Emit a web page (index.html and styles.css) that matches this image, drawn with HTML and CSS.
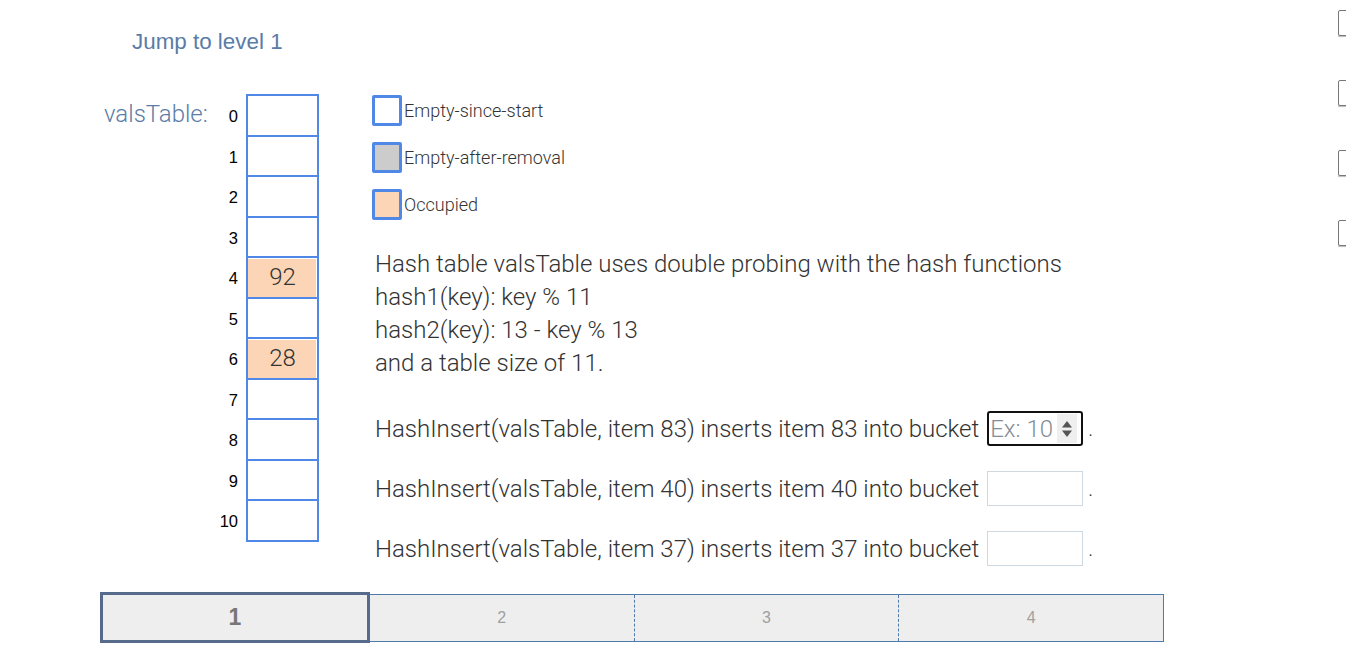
FILE: index.html
```html
<!DOCTYPE html>
<html>
<head>
<meta charset="utf-8">
<link rel="stylesheet" href="styles.css">
</head>
<body>
<div class="page">
  <div class="content">
    <div class="jump">Jump to level 1</div>
    <div class="main">
      <div class="left">
        <div class="tname">valsTable:</div>
        <div class="table">
          <div class="idx">0</div><div class="cell"></div>
          <div class="idx">1</div><div class="cell"></div>
          <div class="idx">2</div><div class="cell"></div>
          <div class="idx">3</div><div class="cell"></div>
          <div class="idx">4</div><div class="cell occ">92</div>
          <div class="idx">5</div><div class="cell"></div>
          <div class="idx">6</div><div class="cell occ">28</div>
          <div class="idx">7</div><div class="cell"></div>
          <div class="idx">8</div><div class="cell"></div>
          <div class="idx">9</div><div class="cell"></div>
          <div class="idx">10</div><div class="cell"></div>
        </div>
      </div>
      <div class="right">
        <div class="legend">
          <div class="lg-row"><span class="lg-box"></span><span>Empty-since-start</span></div>
          <div class="lg-row"><span class="lg-box removed"></span><span>Empty-after-removal</span></div>
          <div class="lg-row"><span class="lg-box occupied"></span><span>Occupied</span></div>
        </div>
        <div class="desc">
          <div>Hash table valsTable uses double probing with the hash functions</div>
          <div>hash1(key): key % 11</div>
          <div>hash2(key): 13 - key % 13</div>
          <div>and a table size of 11.</div>
        </div>
        <div class="questions">
          <div class="q"><span>HashInsert(valsTable, item 83) inserts item 83 into bucket</span><span class="inp focus"><span class="ph">Ex: 10</span><span class="spin"><svg width="12" height="22" viewBox="0 0 12 22"><path d="M6 3 L11 9.5 H1 Z" fill="#555"/><path d="M6 19 L11 12.5 H1 Z" fill="#555"/></svg></span></span><span class="dot">.</span></div>
          <div class="q"><span>HashInsert(valsTable, item 40) inserts item 40 into bucket</span><span class="inp"></span><span class="dot">.</span></div>
          <div class="q"><span>HashInsert(valsTable, item 37) inserts item 37 into bucket</span><span class="inp"></span><span class="dot">.</span></div>
        </div>
      </div>
    </div>
    <div class="levels">
      <div class="lvl current">1</div>
      <div class="lvl">2</div>
      <div class="lvl">3</div>
      <div class="lvl">4</div>
    </div>
  </div>
  <div class="side">
    <div class="sbox"></div>
    <div class="sbox"></div>
    <div class="sbox"></div>
    <div class="sbox"></div>
  </div>
</div>
</body>
</html>
```

FILE: styles.css
```css
html, body {
  margin: 0;
  padding: 0;
  background: #fff;
  overflow: hidden;
}
body {
  font-family: Roboto, "Liberation Sans", sans-serif;
  color: #333;
}
.page {
  display: flex;
  width: 1346px;
  height: 647px;
}
.content {
  width: 1338px;
  padding-left: 100px;
  box-sizing: border-box;
}
.jump {
  margin: 29px 0 0 32px;
  font-family: "Liberation Sans", Arial, sans-serif;
  font-size: 22.4px;
  line-height: 26px;
  color: #5a7ca6;
}
.main {
  display: flex;
  margin-top: 39px;
  padding-left: 4px;
}
.left {
  display: flex;
  align-items: flex-start;
}
.tname {
  width: 112px;
  font-size: 24px;
  font-weight: 300;
  color: #5a7ca6;
  line-height: 40px;
}
.table {
  display: grid;
  grid-template-columns: 30px 73px;
}
.idx {
  font-family: "Liberation Sans", Arial, sans-serif;
  font-size: 16.5px;
  color: #000;
  text-align: right;
  padding-right: 8px;
  height: 40.5px;
  line-height: 44px;
}
.cell {
  box-sizing: border-box;
  height: 42.5px;
  border: 2px solid #4f88e6;
  margin-bottom: -2px;
  text-align: center;
  font-size: 24px;
  font-weight: 300;
  line-height: 38px;
  color: #333;
}
.cell.occ {
  background: #fbd5b5;
  box-shadow: inset -1px 1px 0 #fff;
}
.right {
  margin-left: 53px;
  padding-top: 1px;
}
.legend {
  display: flex;
  flex-direction: column;
  gap: 16px;
}
.lg-row {
  display: flex;
  align-items: center;
  font-size: 18px;
  font-weight: 300;
  color: #333;
}
.lg-box {
  box-sizing: border-box;
  width: 30px;
  height: 31px;
  border: 3px solid #4f88e6;
  border-radius: 2px;
  background: #fff;
  margin-right: 2px;
}
.lg-box.removed { background: #cccccc; }
.lg-box.occupied { background: #fbd5b5; }
.desc {
  margin-top: 28px;
  padding-left: 3px;
  font-size: 24px;
  font-weight: 300;
  line-height: 33px;
  color: #333;
}
.questions {
  padding-left: 3px;
  margin-top: 31px;
  display: flex;
  flex-direction: column;
  gap: 25px;
}
.q {
  display: flex;
  align-items: center;
  font-size: 24px;
  font-weight: 300;
  height: 35px;
  color: #333;
}
.inp {
  box-sizing: border-box;
  width: 96px;
  height: 35px;
  margin-left: 8px;
  border: 1px solid #cdd8e0;
  background: #fff;
  display: flex;
  align-items: center;
}
.inp.focus {
  border: 2px solid #111;
  border-radius: 3px;
  justify-content: space-between;
  padding: 0 4px 0 1px;
}
.ph {
  color: #858d96;
  font-size: 24px;
  font-weight: 300;
}
.spin {
  background: #efefef;
  width: 20px;
  height: 29px;
  display: flex;
  align-items: center;
  justify-content: center;
}
.dot {
  margin-left: 5px;
  font-size: 20px;
}
.levels {
  display: flex;
  width: 1064px;
  height: 48px;
  margin-top: 28px;
  border: 1px solid #4f7bab;
  box-sizing: border-box;
  background: #eeeeee;
}
.lvl {
  flex: 1;
  display: flex;
  align-items: center;
  justify-content: center;
  font-family: "Liberation Sans", Arial, sans-serif;
  font-size: 16px;
  color: #a0a0a0;
  border-left: 1px dashed #4f7bab;
}
.lvl.current {
  border: 3px solid #566b8c;
  margin: -3px 0 -2px -1px;
  font-size: 23px;
  font-weight: bold;
  color: #777;
}
.lvl.current + .lvl {
  border-left: none;
}
.side {
  width: 8px;
  overflow: hidden;
  padding-top: 10px;
  display: flex;
  flex-direction: column;
  gap: 44px;
}
.sbox {
  flex: none;
  box-sizing: border-box;
  width: 24px;
  height: 26px;
  border: 1px solid #777;
  border-radius: 2px;
  box-shadow: -1px 1px 1px #bbb;
}
```
